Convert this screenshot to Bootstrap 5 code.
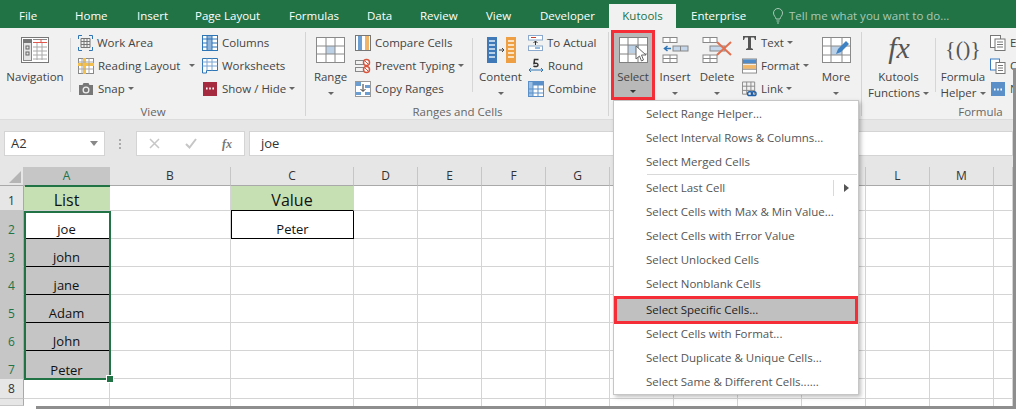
<!DOCTYPE html>
<html lang="en">
<head>
<meta charset="utf-8">
<title>Kutools Select Specific Cells</title>
<link href="https://cdn.jsdelivr.net/npm/bootstrap@5.3.0/dist/css/bootstrap.min.css" rel="stylesheet">
<style>
html,body{margin:0;height:409px;overflow:hidden;background:#fff}
body{font-family:"Open Sans","Noto Sans",sans-serif;font-size:11.5px;color:#444;position:relative}
svg{display:block;flex:none}
.xl-tabs{height:28px;background:#217346;color:#fff;padding:4px 0 0 19px;display:grid;grid-template-columns:56px 62px 58px 94px 78px 53px 66px 54px 69px 67px 96px 1fr}
.xl-tab{height:24px;line-height:24px;white-space:nowrap}
.xl-tab.on{background:#f1f1f1;color:#217346;text-align:center}
.xl-tab.after{padding-left:15px}
.xl-tell{color:#a9c9b7;display:flex;align-items:center;gap:5px}
.xl-ribbon{height:92px;background:#f1f1f1;border-bottom:1px solid #dcdcdc;overflow:hidden}
.xl-group{height:91px;position:relative;flex:none}
.xl-group::after{content:"";position:absolute;right:0;top:4px;bottom:3px;width:1px;background:#d4d4d4}
.xl-group.last{flex:1}
.xl-group.last::after{display:none}
.xl-grouplabel{position:absolute;left:0;right:0;bottom:0;height:14px;line-height:14px;text-align:center;color:#666}
.xl-grouplabel.fm{right:auto;width:155px;padding-left:82px}
.xl-big{height:74px;display:flex;flex-direction:column;align-items:center;flex:none;padding-top:9px;line-height:16px;white-space:nowrap;text-align:center;color:#444}
.xl-big svg{margin-bottom:6px}
.xl-big.tall{padding-top:6px}
.xl-big.tall svg{margin-bottom:5px}
.xl-caret{display:inline-block;width:0;height:0;border:3px solid transparent;border-top:3.5px solid #666;border-bottom:0;vertical-align:middle;margin-left:-1px}
.xl-caret.wide{margin-left:5px}
.xl-caret.flat{margin-left:0}
.xl-capline{height:14px;display:flex;align-items:center;justify-content:center;margin-top:1px}
.xl-capline .xl-caret{margin:0}
.xl-vsep{width:1px;height:54px;background:#d6d6d6;margin-top:10px;flex:none}
.xl-stack{display:flex;flex-direction:column;flex:none;padding-top:3px}
.xl-small{height:23px;display:flex;align-items:center;gap:4px;white-space:nowrap;color:#444}
.xl-select{width:44px;height:70px;margin-top:2px;background:#b9b9b9;border:3px solid #f42d36;padding-top:4px}
.xl-select .xl-caret{border-top-color:#333}
.wd-40{width:40px}.wd-44{width:44px}.wd-48{width:48px}.wd-49{width:49px}.wd-54{width:54px}.wd-55{width:55px}.wd-70{width:70px}.wd-73{width:73px}.wd-80{width:80px}.wd-100{width:100px}.wd-117{width:117px}.wd-131{width:131px}
.wd-253{width:253px}.wd-303{width:303px}.wd-306{width:306px}
.ps-first{padding-left:7px}.ps-txt{padding-left:3px}.ps-sel{padding-left:2px}
.xl-formula{height:47px;background:#e6e6e6;position:relative;display:flex;padding:11px 3px 0 4px;align-items:flex-start}
.xl-box{height:25px;background:#fff;border:1px solid #d4d4d4;display:flex;align-items:center;flex:none}
.xl-name{width:101px;padding:0 6px;justify-content:space-between;color:#333;font-size:13px}
.xl-dots{width:2px;height:10px;margin:8px 15px 0 14px;border-left:2px dotted #aaa;flex:none}
.xl-fx{width:109px;justify-content:space-between;padding:0 12px;color:#c6c6c6}
.xl-fxt{font-family:"Liberation Serif",serif;font-style:italic;font-weight:700;color:#777;font-size:12px}
.xl-input{flex:1;margin-left:4px;padding-left:11px;font-size:13px;color:#333}
.xl-sheet{display:grid;grid-template-columns:24px 86px 121px 123px repeat(10,64px) 19px;grid-template-rows:19px 25px repeat(6,28px) 20px 7px;background:#fff;width:1013px}
.xl-h{background:#e6e6e6;border-right:1px solid #c6c6c6;border-bottom:1px solid #a9a9a9;text-align:center;color:#333;line-height:18px;font-size:12px}
.xl-h.sel{background:#c6c6c6;color:#217346}
.xl-r{background:#e6e6e6;border-right:1px solid #a9a9a9;border-bottom:1px solid #c6c6c6;display:flex;align-items:flex-end;justify-content:center;color:#217346;font-size:12px;line-height:16px}
.xl-r.sel{background:#c6c6c6}
.xl-r.off{color:#333;line-height:18px}
.xl-c{border-right:1px solid #d4d4d4;border-bottom:1px solid #d4d4d4;display:flex;align-items:flex-end;justify-content:center;font-size:13px;color:#111;line-height:17px}
.xl-c.title{background:#c6e0b4;font-size:16px;line-height:20px}
.xl-c.title.blk{border-bottom-color:#000}
.xl-c.gr{background:#c5c5c5;border-bottom:1px solid #000}
.xl-c.gr.end{border-bottom:0}
.xl-c.blk{border-bottom-color:#000}
.xl-c.box{border:1px solid #000;border-top:0}
.xl-c.cut{border-bottom:0}
.xl-corner{background:#e6e6e6;border-right:1px solid #c6c6c6;border-bottom:1px solid #a9a9a9;position:relative;overflow:hidden}
.xl-corner svg{position:absolute;right:2px;bottom:2px}
.xl-range{position:absolute;left:24px;top:211px;width:87px;height:169px;border:2px solid #217346;pointer-events:none}
.xl-handle{position:absolute;left:107px;top:376px;width:6px;height:6px;background:#217346;outline:1px solid #fff}
.xl-head-line{position:absolute;left:25px;top:185px;width:85px;height:2px;background:#217346}
.xl-menu{position:absolute;left:613px;top:100px;width:246px;height:295px;background:#fff;border:1px solid #c6c6c6;box-shadow:2px 2px 4px rgba(0,0,0,.25);padding-top:1px}
.xl-item{height:24px;line-height:24px;padding-left:32px;color:#555;position:relative;white-space:nowrap}
.xl-item.gap{height:1px;background:#d9d9d9;margin:0 1px 1px 33px;padding:0}
.xl-item.on{height:28px;line-height:22px;margin-bottom:-2px;background:#c0c0c0;color:#222;border:3px solid #f42d36;padding-left:29px;z-index:1}
.xl-sub{position:absolute;right:0;top:4px;height:16px;width:25px;border-left:1px solid #d9d9d9;display:flex;align-items:center;justify-content:center}
.xl-sub i{display:block;width:0;height:0;border:4px solid transparent;border-left:5px solid #555;border-right:0}
.xl-shadow-b{position:absolute;left:36px;right:0;top:406px;height:3px;background:#8e8e8e}
.xl-shadow-r{position:absolute;right:0;top:68px;bottom:0;width:3px;background:#8e8e8e}
</style>
</head>
<body>
<div class="xl-tabs">
  <div class="xl-tab">File</div>
  <div class="xl-tab">Home</div>
  <div class="xl-tab">Insert</div>
  <div class="xl-tab">Page Layout</div>
  <div class="xl-tab">Formulas</div>
  <div class="xl-tab">Data</div>
  <div class="xl-tab">Review</div>
  <div class="xl-tab">View</div>
  <div class="xl-tab">Developer</div>
  <div class="xl-tab on">Kutools</div>
  <div class="xl-tab after">Enterprise</div>
  <div class="xl-tab xl-tell">
    <svg width="12" height="16" viewBox="0 0 12 16" fill="none" stroke="#a9c9b7"><path d="M4 11c0-2-2.500-3-2.500-6a4.500 4.500 0 0 1 9 0c0 3-2.500 4-2.500 6zM4.500 13h3M5 15h2"/></svg>
    <span>Tell me what you want to do...</span>
  </div>
</div>

<div class="xl-ribbon d-flex">
  <div class="xl-group d-flex wd-306">
    <div class="xl-grouplabel">View</div>
    <div class="xl-big wd-70">
      <svg width="28" height="26" viewBox="0 0 28 26" fill="#fff" stroke="#777"><rect x=".5" y=".5" width="27" height="25" fill="#fff"/><rect x="2.500" y="2.500" width="8" height="21" fill="#e4e4e4" stroke="#888"/><rect x="2.500" y="2.500" width="8" height="3" fill="#777"/><path d="M12 2.500h14" stroke="#888"/><path d="M12 5.500h14" stroke="#e2574c"/><path d="M20 2v4" stroke="#e2574c"/><path d="M12 10h14M12 14h14M12 18h14M12 22h14M16 6v17M21 6v17" stroke="#aaa" fill="none"/><rect x="5" y="9" width="3" height="3" fill="none" stroke="#666"/><rect x="5" y="15" width="3" height="3" fill="none" stroke="#666"/></svg>
      <span>Navigation</span>
    </div>
    <div class="xl-vsep"></div>
    <div class="xl-stack wd-131 ps-first">
      <div class="xl-small"><svg width="15" height="16" viewBox="0 0 15 16" fill="none"><path d="M.5 4V.5H4M11 .5h3.500V4M14.500 12v3.500H11M4 15.500H.5V12" stroke="#2e75b6"/><path d="M3 3.500h9v9H3zM3 6.500h9M3 9.500h9M6 3.500v9M9 3.500v9" stroke="#777"/></svg><span>Work Area</span></div>
      <div class="xl-small"><svg width="16" height="16" viewBox="0 0 16 16" fill="#fff"><rect x=".5" y=".5" width="15" height="15" stroke="#888"/><path d="M6.500 0v16M0 6.500h16" stroke="#f5c04a" stroke-width="3"/><path d="M.5 4h15M.5 11h15M4 .5v15M11 .5v15" stroke="#aaa" fill="none"/></svg><span>Reading Layout</span><span class="xl-caret wide"></span></div>
      <div class="xl-small"><svg width="16" height="14" viewBox="0 0 16 14"><path d="M1 3h3.500l1-2h5l1 2H15v10H1z" fill="#777"/><circle cx="8" cy="8" r="3.500" fill="#eee"/><circle cx="8" cy="8" r="2.200" fill="#777"/></svg><span>Snap</span><span class="xl-caret"></span></div>
    </div>
    <div class="xl-stack wd-100">
      <div class="xl-small"><svg width="16" height="16" viewBox="0 0 16 16"><rect x=".5" y=".5" width="15" height="15" fill="#fff" stroke="#2e75b6"/><rect x="5" y="1" width="5" height="14" fill="#8fb4dc"/><path d="M5 .5v15M10 .5v15M.5 4h15M.5 8h4.500M10 8h5.500M.5 12h4.500M10 12h5.500" stroke="#2e75b6"/></svg><span>Columns</span></div>
      <div class="xl-small"><svg width="16" height="16" viewBox="0 0 16 16" fill="#fff"><path d="M.5.5h15v12h-11v2.500H.5z" stroke="#2e75b6"/><path d="M.5 4h15M.5 8h15M5 .5v12M10 .5v12" stroke="#7aa5d2" fill="none"/></svg><span>Worksheets</span></div>
      <div class="xl-small"><svg width="16" height="14" viewBox="0 0 16 14"><rect x="1" width="14" height="14" fill="#a5293f"/><path d="M4 6.500h1.600M7.200 6.500h1.600M10.400 6.500h1.600" stroke="#fff" stroke-width="2"/></svg><span>Show / Hide</span><span class="xl-caret"></span></div>
    </div>
  </div>

  <div class="xl-group d-flex wd-303">
    <div class="xl-grouplabel">Ranges and Cells</div>
    <div class="xl-big wd-49">
      <svg width="29" height="26" viewBox="0 0 29 26" fill="#fff" stroke="#8a8a8a"><rect x=".5" y=".5" width="28" height="25"/><rect x="10" y="9" width="9" height="8" fill="#bcd0e6" stroke="none"/><path d="M.5 9h28M.5 17h28M10 .5v25M19 .5v25" fill="none"/></svg>
      <span>Range</span>
      <span class="xl-capline"><span class="xl-caret"></span></span>
    </div>
    <div class="xl-stack wd-117">
      <div class="xl-small"><svg width="16" height="16" viewBox="0 0 16 16"><rect x=".5" y=".5" width="15" height="15" fill="#fff" stroke="#777"/><rect x="3" y="1" width="4" height="14" fill="#6d9ed1"/><rect x="10" y="1" width="4" height="14" fill="#f0b469"/></svg><span>Compare Cells</span></div>
      <div class="xl-small"><svg width="16" height="16" viewBox="0 0 16 16" fill="none"><rect x=".5" y="2.500" width="8" height="4" stroke="#888"/><rect x=".5" y="9.500" width="8" height="4" stroke="#888"/><circle cx="11.500" cy="4.500" r="3" fill="#fff" stroke="#d8553d" stroke-width="1.500"/><circle cx="11.500" cy="11.500" r="3" fill="#fff" stroke="#d8553d" stroke-width="1.500"/><path d="M9.500 2.500l4 4M9.500 9.500l4 4" stroke="#d8553d"/></svg><span>Prevent Typing</span><span class="xl-caret"></span></div>
      <div class="xl-small"><svg width="16" height="16" viewBox="0 0 16 16"><rect x=".5" y=".5" width="15" height="15" fill="#fff" stroke="#999"/><rect x="1" y="1" width="5" height="4" fill="#6d9ed1"/><rect x="10" y="4" width="5" height="3" fill="#6d9ed1"/><rect x="1" y="11" width="5" height="3" fill="#6d9ed1"/><rect x="10" y="11" width="5" height="3" fill="#6d9ed1"/><path d="M8 3v7M5.500 8L8 10.500 10.500 8" stroke="#333" fill="none"/></svg><span>Copy Ranges</span></div>
    </div>
    <div class="xl-vsep"></div>
    <div class="xl-big wd-55">
      <svg width="30" height="26" viewBox="0 0 30 26"><rect x="1" y="0" width="10" height="26" fill="#3f79b8"/><rect x="20" y="0" width="10" height="26" fill="#ee9f44"/><path d="M3 4h6M3 8h6M3 12h6M3 16h6M3 20h6" stroke="#b9d2ea" stroke-width="2"/><path d="M22 4h6M22 8h6M22 12h6M22 16h6M22 20h6" stroke="#fbe2c2" stroke-width="2"/><path d="M13 13h5M16 11l2 2-2 2" stroke="#444" fill="none"/></svg>
      <span>Content</span>
      <span class="xl-capline"><span class="xl-caret"></span></span>
    </div>
    <div class="xl-stack wd-80">
      <div class="xl-small"><svg width="15" height="16" viewBox="0 0 15 16" fill="#fff" stroke="#8aa9cc"><rect x=".5" y=".5" width="14" height="4.500"/><rect x=".5" y="11" width="14" height="4.500"/><path d="M3 2.500h5" stroke="#c8402f"/><path d="M7 13h5" stroke="#2e75b6"/><path d="M7.500 6v4M5.500 8l2-2 2 2" stroke="#333" fill="none"/></svg><span>To Actual</span></div>
      <div class="xl-small"><svg width="16" height="16" viewBox="0 0 16 16"><path d="M1 12h14M3 10l-2 2 2 2M13 10l2 2-2 2" stroke="#2e75b6" fill="none"/><path d="M10.500 1.500H6.500L6 5.500c2.500-.8 4 0 4 1.500s-2.500 2.200-4.500 1" stroke="#333" stroke-width="1.500" fill="none"/></svg><span>Round</span></div>
      <div class="xl-small"><svg width="16" height="16" viewBox="0 0 16 16"><rect x=".5" y=".5" width="15" height="15" fill="#fff" stroke="#5b8fc7"/><rect x="1" y="1" width="14" height="3.500" fill="#5b8fc7"/><rect x="1" y="1" width="4" height="14" fill="#9cbfe2"/><path d="M.5 8h15M.5 12h15M5 .5v15M10 .5v15" stroke="#5b8fc7" fill="none"/></svg><span>Combine</span></div>
    </div>
  </div>

  <div class="xl-group d-flex wd-253 ps-sel">
    <div class="xl-big xl-select">
      <svg width="29" height="26" viewBox="0 0 29 26" fill="#fff" stroke="#808080"><rect x=".5" y=".5" width="28" height="25"/><rect x="9" y="8" width="11" height="8" fill="#bcd0e6" stroke="none"/><path d="M.5 8h28M.5 17h28M9 .5v25M19 .5v25" fill="none"/><path d="M17 9v13l3.500-3 2 5 2-1-2-5h4.500z" fill="#fff" stroke="#666"/></svg>
      <span>Select</span>
      <span class="xl-capline"><span class="xl-caret"></span></span>
    </div>
    <div class="xl-big wd-40">
      <svg width="27" height="26" viewBox="0 0 27 26" fill="#fff" stroke="#888"><rect x="1" y=".5" width="14" height="5"/><rect x="11" y="9" width="15" height="5" fill="#c5d7ea"/><path d="M18.500 9v5" fill="none"/><rect x="1" y="18" width="14" height="7.500"/><path d="M8 .5v5M8 18v7.500M1 21.500h14" fill="none"/><path d="M9 11.500H3M5.500 9l-3 2.500 3 2.500" stroke="#2e75b6" stroke-width="1.500" fill="none"/></svg>
      <span>Insert</span>
      <span class="xl-capline"><span class="xl-caret"></span></span>
    </div>
    <div class="xl-big wd-44">
      <svg width="30" height="26" viewBox="0 0 30 26" fill="#fff" stroke="#888"><rect x="1" y=".5" width="14" height="5"/><rect x="8" y="9" width="15" height="5" fill="#c5d7ea"/><rect x="1" y="18" width="14" height="7.500"/><path d="M8 .5v5M8 18v7.500M1 21.500h14" fill="none"/><path d="M15 5l14 13M29 5L15 18" stroke="#e2704f" stroke-width="2" fill="none"/></svg>
      <span>Delete</span>
      <span class="xl-capline"><span class="xl-caret"></span></span>
    </div>
    <div class="xl-stack wd-73 ps-txt">
      <div class="xl-small"><svg width="15" height="14" viewBox="0 0 15 14"><path d="M1 0h13v4h-1l-1-2.500H9V12l2 1v1H4v-1l2-1V1.500H3L2 4H1z" fill="#555"/></svg><span>Text</span><span class="xl-caret"></span></div>
      <div class="xl-small"><svg width="15" height="16" viewBox="0 0 16 16"><rect x=".5" y=".5" width="15" height="15" fill="#fff" stroke="#888"/><rect x="1" y="1" width="14" height="4" fill="#4d8ac7"/><rect x="1" y="7" width="14" height="4" fill="#f3b768"/><path d="M.5 5.500h15M.5 11.500h15" stroke="#888"/></svg><span>Format</span><span class="xl-caret"></span></div>
      <div class="xl-small"><svg width="15" height="16" viewBox="0 0 16 16" fill="none"><path d="M.5.5h13v13H.5zM.5 5h13M.5 9.500h13M5 .5v13M9.500.5v13" stroke="#888"/><rect x="6" y="11" width="5" height="4" rx="2" stroke="#1f5fa8" stroke-width="1.500" fill="#f1f1f1"/><rect x="10" y="11" width="5" height="4" rx="2" stroke="#1f5fa8" stroke-width="1.500"/></svg><span>Link</span><span class="xl-caret"></span></div>
    </div>
    <div class="xl-big wd-48">
      <svg width="29" height="26" viewBox="0 0 29 26" fill="#fff" stroke="#8a8a8a"><rect x=".5" y=".5" width="28" height="25"/><rect x="9" y="9" width="11" height="9" fill="#bcd0e6" stroke="none"/><path d="M.5 9h28M.5 18h28M9 .5v25M20 .5v25" fill="none"/><path d="M14 17l2-5 8-8 3 3-8 8z" fill="#3f82c4" stroke="none"/></svg>
      <span>More</span>
      <span class="xl-capline"><span class="xl-caret"></span></span>
    </div>
  </div>

  <div class="xl-group last d-flex">
    <div class="xl-grouplabel fm">Formula</div>
    <div class="xl-big tall wd-73">
      <svg width="40" height="30" viewBox="0 0 40 30"><text x="20" y="24" font-family="Liberation Serif" font-style="italic" font-size="30" fill="#555" text-anchor="middle">fx</text></svg>
      <span>Kutools</span>
      <span>Functions <span class="xl-caret flat"></span></span>
    </div>
    <div class="xl-vsep"></div>
    <div class="xl-big tall wd-54">
      <svg width="40" height="30" viewBox="0 0 40 30"><text x="20" y="22" font-family="Liberation Serif" font-size="22" fill="#555" text-anchor="middle">{()}</text></svg>
      <span>Formula</span>
      <span>Helper <span class="xl-caret flat"></span></span>
    </div>
    <div class="xl-stack">
      <div class="xl-small"><svg width="16" height="16" viewBox="0 0 16 16" fill="#fff" stroke="#777"><rect x=".5" y=".5" width="10" height="12"/><rect x="5" y="4" width="10" height="11.500"/><path d="M7 7h6M7 9.500h6M7 12h6" fill="none"/></svg><span>E</span></div>
      <div class="xl-small"><svg width="16" height="16" viewBox="0 0 16 16" fill="#fff" stroke="#3a7cc1"><rect x=".5" y="1" width="9" height="11"/><rect x="6" y="4.500" width="9" height="11" stroke="#777"/><path d="M8 7.500h5M8 10h5M8 12.500h5" fill="none" stroke="#777"/></svg><span>C</span></div>
      <div class="xl-small"><svg width="16" height="14" viewBox="0 0 16 14"><rect x="1" width="14" height="14" fill="#5b8fc7"/><path d="M4 7.500h1.600M7.200 7.500h1.600M10.400 7.500h1.600" stroke="#fff" stroke-width="2"/></svg><span>N</span></div>
    </div>
  </div>
</div>

<div class="xl-formula">
  <div class="xl-box xl-name"><span>A2</span><svg width="8" height="5" viewBox="0 0 8 5"><path d="M0 0h8L4 5z" fill="#888"/></svg></div>
  <div class="xl-dots"></div>
  <div class="xl-box xl-fx">
    <svg width="11" height="11" viewBox="0 0 11 11" stroke="#c6c6c6" stroke-width="1.500"><path d="M1 1l9 9M10 1l-9 9"/></svg>
    <svg width="12" height="11" viewBox="0 0 12 11" fill="none" stroke="#c6c6c6" stroke-width="2"><path d="M1 6l3.500 3.500L11 1"/></svg>
    <span class="xl-fxt">fx</span>
  </div>
  <div class="xl-box xl-input">joe</div>
</div>

<div class="xl-sheet">
  <div class="xl-corner"><svg width="12" height="12" viewBox="0 0 12 12"><path d="M12 0v12H0z" fill="#b5b5b5"/></svg></div>
  <div class="xl-h sel">A</div><div class="xl-h">B</div><div class="xl-h">C</div><div class="xl-h">D</div><div class="xl-h">E</div><div class="xl-h">F</div><div class="xl-h">G</div><div class="xl-h">H</div><div class="xl-h">I</div><div class="xl-h">J</div><div class="xl-h">K</div><div class="xl-h">L</div><div class="xl-h">M</div><div class="xl-h"></div>

  <div class="xl-r off">1</div><div class="xl-c title">List</div><div class="xl-c"></div><div class="xl-c title blk">Value</div><div class="xl-c"></div><div class="xl-c"></div><div class="xl-c"></div><div class="xl-c"></div><div class="xl-c"></div><div class="xl-c"></div><div class="xl-c"></div><div class="xl-c"></div><div class="xl-c"></div><div class="xl-c"></div><div class="xl-c"></div>

  <div class="xl-r sel">2</div><div class="xl-c blk">joe</div><div class="xl-c"></div><div class="xl-c box">Peter</div><div class="xl-c"></div><div class="xl-c"></div><div class="xl-c"></div><div class="xl-c"></div><div class="xl-c"></div><div class="xl-c"></div><div class="xl-c"></div><div class="xl-c"></div><div class="xl-c"></div><div class="xl-c"></div><div class="xl-c"></div>

  <div class="xl-r sel">3</div><div class="xl-c gr">john</div><div class="xl-c"></div><div class="xl-c"></div><div class="xl-c"></div><div class="xl-c"></div><div class="xl-c"></div><div class="xl-c"></div><div class="xl-c"></div><div class="xl-c"></div><div class="xl-c"></div><div class="xl-c"></div><div class="xl-c"></div><div class="xl-c"></div><div class="xl-c"></div>

  <div class="xl-r sel">4</div><div class="xl-c gr">jane</div><div class="xl-c"></div><div class="xl-c"></div><div class="xl-c"></div><div class="xl-c"></div><div class="xl-c"></div><div class="xl-c"></div><div class="xl-c"></div><div class="xl-c"></div><div class="xl-c"></div><div class="xl-c"></div><div class="xl-c"></div><div class="xl-c"></div><div class="xl-c"></div>

  <div class="xl-r sel">5</div><div class="xl-c gr">Adam</div><div class="xl-c"></div><div class="xl-c"></div><div class="xl-c"></div><div class="xl-c"></div><div class="xl-c"></div><div class="xl-c"></div><div class="xl-c"></div><div class="xl-c"></div><div class="xl-c"></div><div class="xl-c"></div><div class="xl-c"></div><div class="xl-c"></div><div class="xl-c"></div>

  <div class="xl-r sel">6</div><div class="xl-c gr">John</div><div class="xl-c"></div><div class="xl-c"></div><div class="xl-c"></div><div class="xl-c"></div><div class="xl-c"></div><div class="xl-c"></div><div class="xl-c"></div><div class="xl-c"></div><div class="xl-c"></div><div class="xl-c"></div><div class="xl-c"></div><div class="xl-c"></div><div class="xl-c"></div>

  <div class="xl-r sel">7</div><div class="xl-c gr end">Peter</div><div class="xl-c"></div><div class="xl-c"></div><div class="xl-c"></div><div class="xl-c"></div><div class="xl-c"></div><div class="xl-c"></div><div class="xl-c"></div><div class="xl-c"></div><div class="xl-c"></div><div class="xl-c"></div><div class="xl-c"></div><div class="xl-c"></div><div class="xl-c"></div>

  <div class="xl-r off">8</div><div class="xl-c"></div><div class="xl-c"></div><div class="xl-c"></div><div class="xl-c"></div><div class="xl-c"></div><div class="xl-c"></div><div class="xl-c"></div><div class="xl-c"></div><div class="xl-c"></div><div class="xl-c"></div><div class="xl-c"></div><div class="xl-c"></div><div class="xl-c"></div><div class="xl-c"></div>

  <div class="xl-r off"></div><div class="xl-c cut"></div><div class="xl-c cut"></div><div class="xl-c cut"></div><div class="xl-c cut"></div><div class="xl-c cut"></div><div class="xl-c cut"></div><div class="xl-c cut"></div><div class="xl-c cut"></div><div class="xl-c cut"></div><div class="xl-c cut"></div><div class="xl-c cut"></div><div class="xl-c cut"></div><div class="xl-c cut"></div><div class="xl-c cut"></div>
</div>

<div class="xl-head-line"></div>
<div class="xl-range"></div>
<div class="xl-handle"></div>

<div class="xl-menu">
  <div class="xl-item">Select Range Helper...</div>
  <div class="xl-item">Select Interval Rows &amp; Columns...</div>
  <div class="xl-item">Select Merged Cells</div>
  <div class="xl-item gap"></div>
  <div class="xl-item">Select Last Cell<span class="xl-sub"><i></i></span></div>
  <div class="xl-item">Select Cells with Max &amp; Min Value...</div>
  <div class="xl-item">Select Cells with Error Value</div>
  <div class="xl-item">Select Unlocked Cells</div>
  <div class="xl-item">Select Nonblank Cells</div>
  <div class="xl-item on">Select Specific Cells...</div>
  <div class="xl-item">Select Cells with Format...</div>
  <div class="xl-item">Select Duplicate &amp; Unique Cells...</div>
  <div class="xl-item">Select Same &amp; Different Cells......</div>
</div>

<div class="xl-shadow-b"></div>
<div class="xl-shadow-r"></div>
<script src="https://cdn.jsdelivr.net/npm/bootstrap@5.3.0/dist/js/bootstrap.bundle.min.js"></script>
</body>
</html>
